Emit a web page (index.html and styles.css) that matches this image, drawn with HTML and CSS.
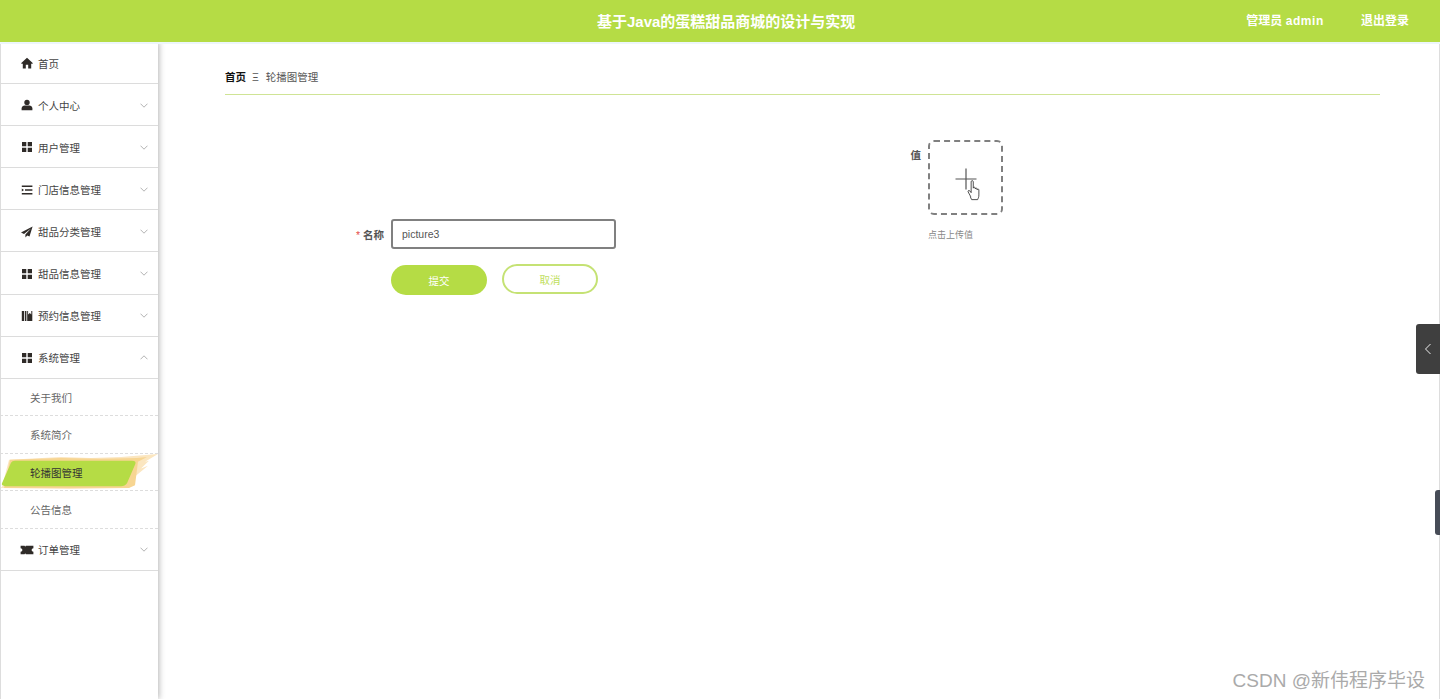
FILE: index.html
```html
<!DOCTYPE html>
<html lang="zh">
<head>
  <meta charset="UTF-8" />
  <title>基于Java的蛋糕甜品商城的设计与实现</title>
  <link rel="stylesheet" href="styles.css">
</head>
<body>
  <svg class="sprite" width="0" height="0">
    <symbol id="i-grid" viewBox="0 0 12 12"><path d="M1 1h4.300v4.300H1zM6.700 1H11v4.300H6.700zM1 6.700h4.300V11H1zM6.700 6.700H11V11H6.700z"/></symbol>
    <symbol id="i-down" viewBox="0 0 8 5"><path d="M.5.7 4 4.200 7.500.7" fill="none" stroke="#aaa" stroke-width=".9"/></symbol>
    <symbol id="i-up" viewBox="0 0 8 5"><path d="M.5 4.300 4 .8l3.500 3.500" fill="none" stroke="#aaa" stroke-width=".9"/></symbol>
  </svg>

  <header class="topbar">
    <div class="title">基于Java的蛋糕甜品商城的设计与实现</div>
    <div class="user">
      <span>管理员 <span class="admin">admin</span></span>
      <span>退出登录</span>
    </div>
  </header>

  <div class="layout">
    <aside class="sidebar">
      <ul class="menu">
        <li class="item">
          <svg class="icon" viewBox="0 0 12 12"><path d="M6 .8.3 5.900v.9h1.500V11.400h3V7.800h2.400v3.600h3V6.800h1.500v-.9z"/></svg>
          <span>首页</span>
        </li>
        <li class="item">
          <svg class="icon" viewBox="0 0 12 12"><circle cx="6" cy="3.400" r="2.700"/><path d="M.6 11.200V9.600c0-1.900 1.600-3 3-3h4.800c1.400 0 3 1.100 3 3v1.600z"/></svg>
          <span>个人中心</span>
          <svg class="arrow"><use href="#i-down"/></svg>
        </li>
        <li class="item">
          <svg class="icon"><use href="#i-grid"/></svg>
          <span>用户管理</span>
          <svg class="arrow"><use href="#i-down"/></svg>
        </li>
        <li class="item">
          <svg class="icon" viewBox="0 0 12 12"><path d="M.8 1.600h10.600v1.500H.8zM4 5.200h7.400v1.500H4zM.8 8.900h10.600v1.500H.8zM.8 4.400 3 6 .8 7.600z"/></svg>
          <span>门店信息管理</span>
          <svg class="arrow"><use href="#i-down"/></svg>
        </li>
        <li class="item">
          <svg class="icon" viewBox="0 0 12 12"><path d="M11.600.6 0 6.600l3 1.300L10 2.600 4.400 8.600v2.900l1.900-2 2.200 1z"/></svg>
          <span>甜品分类管理</span>
          <svg class="arrow"><use href="#i-down"/></svg>
        </li>
        <li class="item">
          <svg class="icon"><use href="#i-grid"/></svg>
          <span>甜品信息管理</span>
          <svg class="arrow"><use href="#i-down"/></svg>
        </li>
        <li class="item">
          <svg class="icon" viewBox="0 0 12 12"><path d="M.8 1h2.200v10H.8zM3.800 1h1.600v10H3.800zM6.200 1h.9v3.400L8.800 3l1.500 1.400V1h1v10H6.200z"/></svg>
          <span>预约信息管理</span>
          <svg class="arrow"><use href="#i-down"/></svg>
        </li>
        <li class="item">
          <svg class="icon"><use href="#i-grid"/></svg>
          <span>系统管理</span>
          <svg class="arrow"><use href="#i-up"/></svg>
        </li>
        <li class="sub">关于我们</li>
        <li class="sub">系统简介</li>
        <li class="sub active">
          <svg class="brush" viewBox="0 0 157 38" preserveAspectRatio="none">
            <path d="M8 6 60 3l30 1 30-1 37-3-13 8 4-1-8 8 7-3-14 12-5 11-60 1-70-1 3-1z" fill="#fbe6c0"/>
            <path d="M9 6 60 4l40 1 36-1 10-1-9 5-3 24-6 3H3z" fill="#f7d592"/>
            <path d="M10 9q1-2 4-2h117q5 0 3 4l-8 19q-2 3-6 3H4q-4-1-3-3z" fill="#b5dc45"/>
          </svg>
          <span>轮播图管理</span>
        </li>
        <li class="sub">公告信息</li>
        <li class="item">
          <svg class="icon wide" viewBox="0 0 14 12"><path d="M.6 1.800h4l.6 1 .6-1h7.600v2.400a1.800 1.800 0 0 0 0 3.600v2.400H5.800l-.6-1-.6 1h-4V7.800a1.800 1.800 0 0 0 0-3.600z"/></svg>
          <span>订单管理</span>
          <svg class="arrow"><use href="#i-down"/></svg>
        </li>
      </ul>
    </aside>

    <main class="content">
      <div class="crumbs">
        <b>首页</b>
        <i>Ξ</i>
        <span>轮播图管理</span>
      </div>

      <form class="form">
        <div class="col-left">
          <div class="field">
            <label class="label name-label"><em>*</em> 名称</label>
            <input class="input" type="text" value="picture3">
          </div>
          <div class="buttons">
            <button class="btn submit" type="button">提交</button>
            <button class="btn cancel" type="button">取消</button>
          </div>
        </div>
        <div class="col-right">
          <label class="label value-label">值</label>
          <div>
            <div class="upload">
              <svg class="upload-icon" viewBox="0 0 40 44">
                <path d="M9.500 13h21M20 2.500v21" fill="none" stroke="#555" stroke-width="1.200"/>
                <path transform="translate(7.300 4.300) scale(.85)" d="M20.500 31l-3-5.500c-.8-1.500 1-2.500 2-1.200l1.500 2V13.500c0-1.800 2.500-1.800 2.500 0V21c0-1.500 2.300-1.500 2.300 0v1c0-1.400 2.200-1.400 2.200 0v1c0-1.300 2.100-1.300 2.100 0v6c0 3-1 4-1.500 5.500h-7c-.5-1.500-1.500-2.500-1.600-3.500z" fill="#fff" stroke="#333" stroke-width="1"/>
              </svg>
            </div>
            <p class="hint">点击上传值</p>
          </div>
        </div>
      </form>
    </main>
  </div>

  <div class="side-tab">
    <svg width="8" height="12" viewBox="0 0 8 12"><path d="M6.500 1 1.500 6l5 5" fill="none" stroke="#eee" stroke-width="1"/></svg>
  </div>
  <div class="side-tab-small"></div>
  <div class="watermark">CSDN @新伟程序毕设</div>
</body>
</html>
```

FILE: styles.css
```css
* {
  box-sizing: border-box;
}

html, body {
  height: 100%;
}

body {
  margin: 0;
  background: #fff;
  overflow: hidden;
  position: relative;
  font-family: "Liberation Sans", "Noto Sans CJK SC", sans-serif;
  font-size: 10.5px;
  color: #444;
}

.sprite {
  position: absolute;
}

.topbar {
  height: 44px;
  border-bottom: 2px solid #edf6fb;
  background: #b5dc45;
  color: #fff;
  font-weight: 700;
  display: flex;
  align-items: center;
  position: relative;
  z-index: 1;
}

.title {
  margin: -2px 0 0 597px;
  font-size: 15px;
  white-space: nowrap;
}

.user {
  margin: -3px 31px 0 auto;
  display: flex;
  gap: 37px;
  font-size: 12px;
}

.admin {
  letter-spacing: 0.6px;
}

.layout {
  display: flex;
  height: 655px;
}

.sidebar {
  width: 158px;
  margin-top: -2px;
  border-left: 1px solid #ddd;
  background: #fff;
  box-shadow: 1px 0 6px rgba(0,0,0,0.3);
  position: relative;
}

.menu {
  list-style: none;
  margin: 0 0 0 -1px;
  padding: 0;
}

.item {
  height: 42.1px;
  padding: 1.4px 0 0 21px;
  border-bottom: 1px solid #dcdcdc;
  display: flex;
  align-items: center;
  color: #444;
}

.icon {
  width: 12px;
  height: 12px;
  margin-right: 5px;
  fill: #2f2b28;
  flex: none;
}

.icon.wide {
  width: 14px;
  margin-left: -1px;
  margin-right: 4px;
}

.arrow {
  width: 8px;
  height: 5px;
  margin-left: auto;
  margin-right: 10px;
}

.sub {
  height: 37.5px;
  padding-left: 30px;
  border-bottom: 1px dashed #ddd;
  display: flex;
  align-items: center;
  color: #666;
  position: relative;
}

.sub.active {
  color: #333;
}

.sub span {
  position: relative;
}

.brush {
  position: absolute;
  left: 1px;
  top: 0;
  width: 157px;
  height: 37px;
}

.content {
  flex: 1;
  padding: 0 59px 0 67px;
  border-right: 1px solid #ddd;
}

.crumbs {
  height: 51px;
  padding-top: 15px;
  border-bottom: 1px solid #cfe495;
  display: flex;
  align-items: center;
  color: #555;
}

.crumbs b {
  color: #111;
}

.crumbs i {
  font-style: normal;
  margin: 0 7px 0 6px;
  font-size: 10.5px;
}

.form {
  display: flex;
  padding-top: 45px;
}

.col-left {
  width: 577px;
  padding-top: 79px;
}

.field {
  display: flex;
  align-items: center;
}

.label {
  font-weight: 700;
  color: #555;
  text-align: right;
}

.name-label {
  width: 159px;
  margin-right: 7px;
}

.name-label em {
  font-style: normal;
  font-weight: 400;
  color: #e4504a;
}

.input {
  width: 225px;
  height: 30px;
  padding: 0 9px;
  border: 2px solid #808080;
  border-radius: 3px;
  font: 10.5px "Liberation Sans", sans-serif;
  color: #555;
  outline: none;
}

.buttons {
  display: flex;
  align-items: flex-start;
  gap: 15px;
  margin: 15px 0 0 166px;
}

.btn {
  width: 96px;
  height: 30px;
  border-radius: 15px;
  font: 10.5px "Liberation Sans", "Noto Sans CJK SC", sans-serif;
  padding: 0;
}

.submit {
  margin-top: 1px;
  background: #b5dc45;
  border: none;
  color: #fff;
}

.cancel {
  background: #fff;
  border: 2px solid #c5e274;
  color: #bfe060;
}

.col-right {
  display: flex;
  padding-left: 100px;
}

.value-label {
  width: 19px;
  margin-right: 7px;
  margin-top: 7px;
}

.upload {
  width: 75px;
  height: 75px;
  border: 2px dashed #808080;
  border-radius: 6px;
  display: flex;
  align-items: center;
  justify-content: center;
}

.upload-icon {
  width: 40px;
  height: 44px;
  margin-top: 21px;
}

.hint {
  margin: 13px 0 0;
  font-size: 9px;
  color: #888;
}

.side-tab {
  position: absolute;
  right: 0;
  top: 324px;
  width: 24px;
  height: 50px;
  background: #3f3f3f;
  border-radius: 3px 0 0 3px;
  display: flex;
  align-items: center;
  justify-content: center;
}

.side-tab-small {
  position: absolute;
  right: 0;
  top: 490px;
  width: 5px;
  height: 45px;
  background: #474c57;
  border-radius: 3px 0 0 3px;
}

.watermark {
  position: absolute;
  right: 15px;
  top: 665px;
  font-size: 19px;
  color: #aaa;
  white-space: nowrap;
}
```
